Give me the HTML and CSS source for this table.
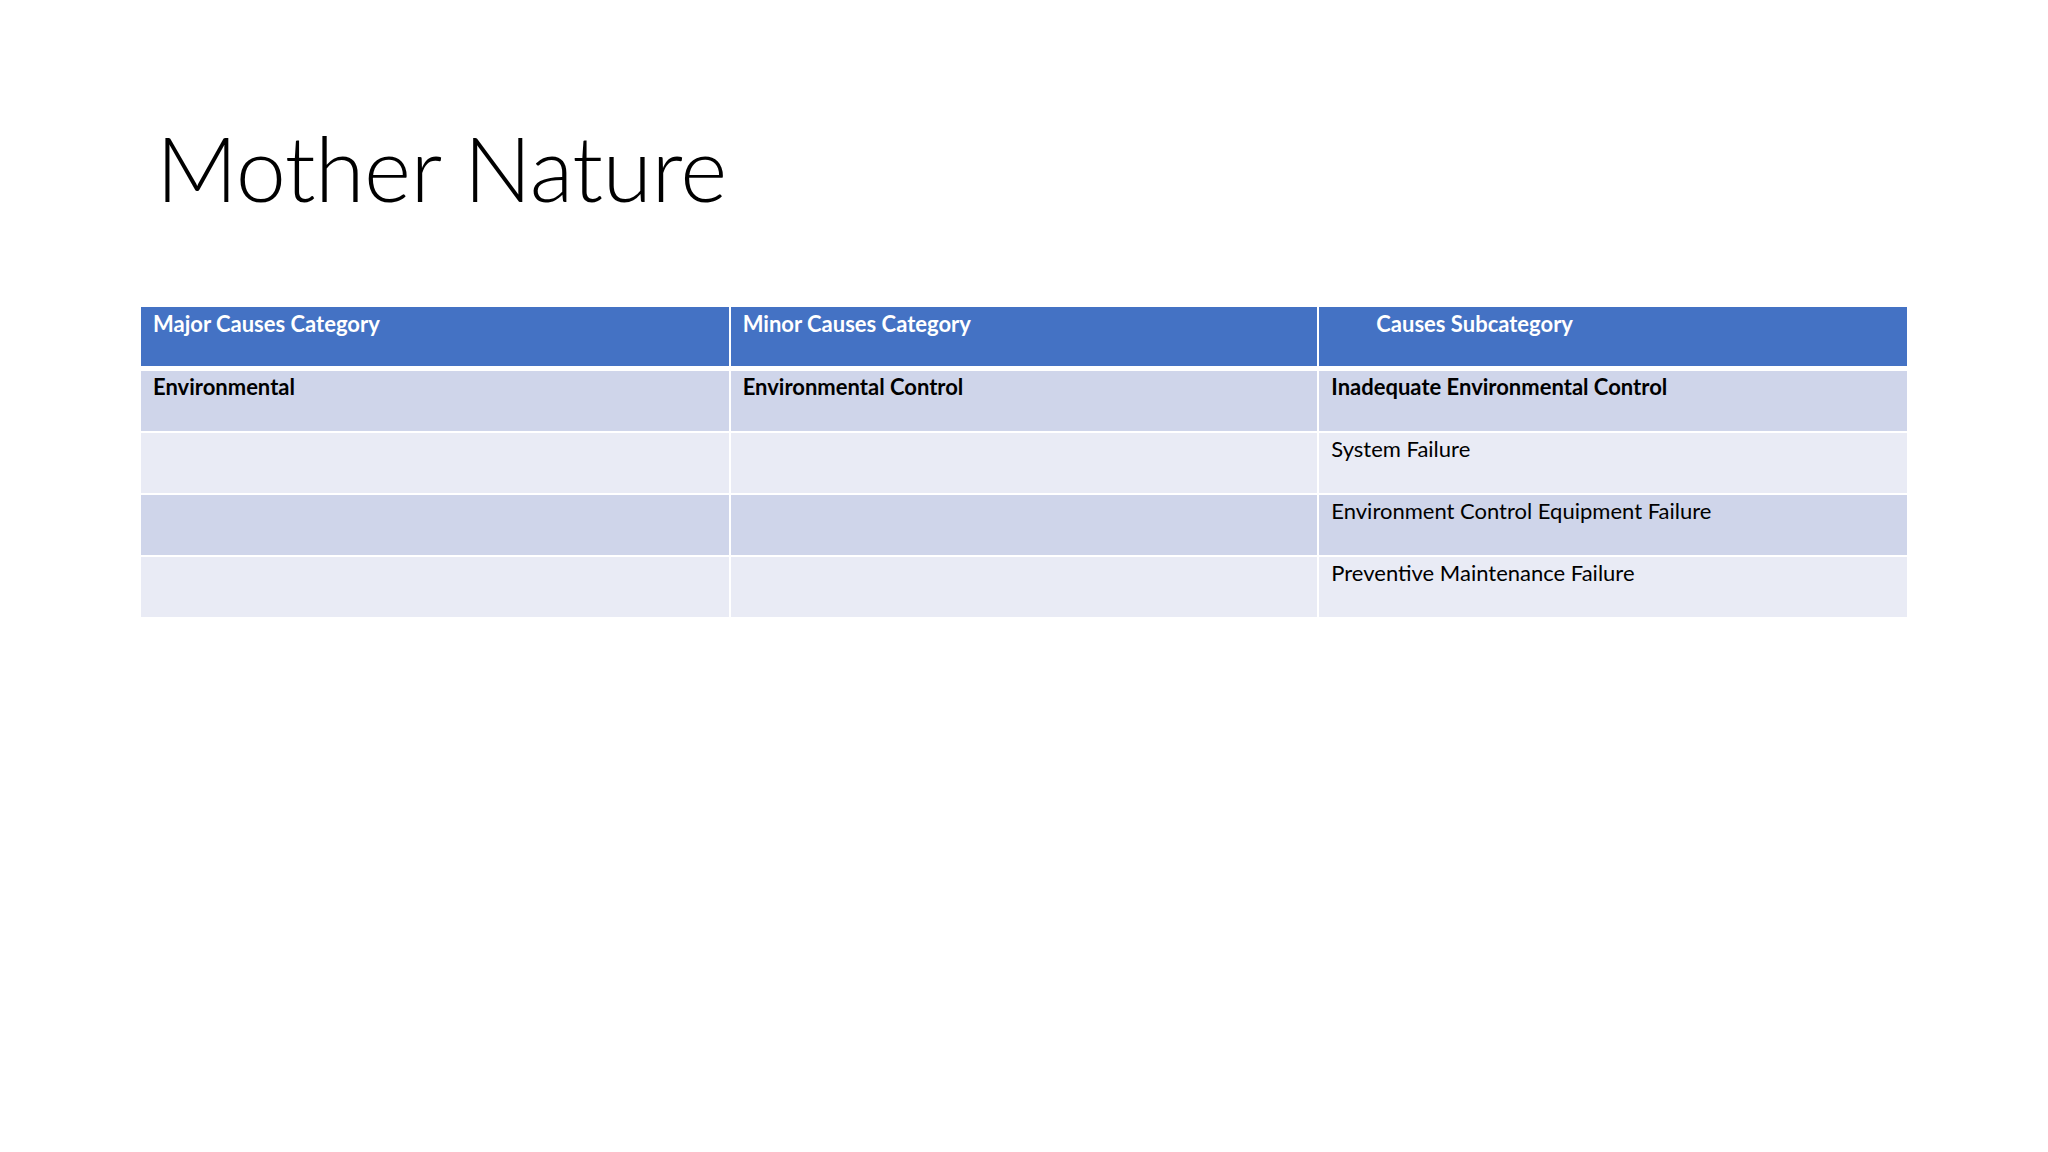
FILE: index.html
```html
<!DOCTYPE html>
<html>
<head>
<meta charset="utf-8">
<link rel="stylesheet" href="styles.css">
</head>
<body>
<div class="slide">
  <h1 class="title">Mother Nature</h1>
  <table class="causes">
    <thead>
      <tr class="head">
        <th>Major Causes Category</th>
        <th>Minor Causes Category</th>
        <th><span class="indent">Causes Subcategory</span></th>
      </tr>
    </thead>
    <tbody>
      <tr class="odd">
        <td class="b">Environmental</td>
        <td class="b">Environmental Control</td>
        <td class="b">Inadequate Environmental Control</td>
      </tr>
      <tr class="even">
        <td></td>
        <td></td>
        <td>System Failure</td>
      </tr>
      <tr class="odd">
        <td></td>
        <td></td>
        <td>Environment Control Equipment Failure</td>
      </tr>
      <tr class="even">
        <td></td>
        <td></td>
        <td>Preventive Maintenance Failure</td>
      </tr>
    </tbody>
  </table>
</div>
</body>
</html>
```

FILE: styles.css
```css
html, body {
  margin: 0;
  padding: 0;
  background: #ffffff;
}
.slide {
  width: 2048px;
  height: 1152px;
  padding: 117px 0 0 141px;
  box-sizing: border-box;
  font-family: Lato, "Open Sans", sans-serif;
}
.title {
  margin: 0 0 90px 15px;
  font-family: Lato, "Open Sans", sans-serif;
  font-weight: 300;
  font-size: 90px;
  line-height: 100px;
  color: #000;
  letter-spacing: -0.5px;
}
.causes {
  width: 1766px;
  border-collapse: collapse;
  table-layout: fixed;
  font-size: 22px;
}
.causes th, .causes td {
  text-align: left;
  vertical-align: top;
  padding: 4px 12px 0 12px;
  border-left: 2px solid #fff;
  border-right: 2px solid #fff;
  line-height: 26px;
}
.causes th:first-child, .causes td:first-child { border-left: none; }
.causes th:last-child, .causes td:last-child { border-right: none; }
.head th {
  background: #4472c4;
  color: #fff;
  font-weight: 700;
  height: 55px;
  border-bottom: 5px solid #fff;
}
.causes td {
  height: 57px;
  padding-top: 3px;
  color: #000;
  border-bottom: 2px solid #fff;
}
.causes tbody tr:last-child td { border-bottom: none; }
.odd td { background: #cfd5ea; }
.even td { background: #e9ebf5; }
.b { font-weight: 700; }
.indent { padding-left: 45px; }
```
